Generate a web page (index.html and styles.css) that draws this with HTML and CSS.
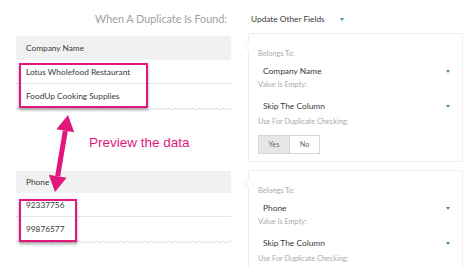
FILE: index.html
```html
<!DOCTYPE html>
<html lang="en">

<head>
    <meta charset="UTF-8">
    <title>Duplicate Settings</title>
    <link rel="stylesheet" href="styles.css">
</head>

<body>
    <div class="page">
        <div class="top-left">When A Duplicate Is Found:</div>
        <div class="top-right">
            <span class="mode">Update Other Fields</span>
            <span class="caret"></span>
        </div>

        <div class="column-block">
            <div class="col-header">Company Name</div>
            <div class="col-row">Lotus Wholefood Restaurant</div>
            <div class="col-row last">FoodUp Cooking Supplies</div>
            <svg class="wavy" width="215" height="4"><defs><pattern id="zz" width="6" height="4" patternUnits="userSpaceOnUse"><polyline points="0,3 3,1 6,3" fill="none" stroke="#dcdcdc" stroke-width="1"/></pattern></defs><rect width="215" height="4" fill="url(#zz)"/></svg>
        </div>
        <div class="card">
            <div class="field-label">Belongs To:</div>
            <div class="select s1">Company Name <span class="caret"></span></div>
            <div class="field-label l2">Value Is Empty:</div>
            <div class="select s2">Skip The Column <span class="caret"></span></div>
            <div class="field-label l3">Use For Duplicate Checking:</div>
            <div class="toggle">
                <span class="opt on">Yes</span><span class="opt">No</span>
            </div>
        </div>

        <div class="column-block second">
            <div class="col-header">Phone</div>
            <div class="col-row">92337756</div>
            <div class="col-row last">99876577</div>
            <svg class="wavy" width="215" height="4"><rect width="215" height="4" fill="url(#zz)"/></svg>
        </div>
        <div class="card">
            <div class="field-label">Belongs To:</div>
            <div class="select s1">Phone <span class="caret"></span></div>
            <div class="field-label l2">Value Is Empty:</div>
            <div class="select s2">Skip The Column <span class="caret"></span></div>
            <div class="field-label l3">Use For Duplicate Checking:</div>
        </div>
    </div>

    <!-- annotation layer -->
    <div class="mark mark-company"></div>
    <div class="mark mark-phone"></div>
    <div class="note">Preview the data</div>
    <svg class="arrow" width="474" height="267">
        <line x1="65.3" y1="130.8" x2="57.7" y2="176.2" stroke="#e3167c" stroke-width="5"/>
        <polygon points="68,115 74.2,132.3 56.4,129.3" fill="#e3167c"/>
        <polygon points="55,192 66.6,177.7 48.8,174.7" fill="#e3167c"/>
    </svg>
</body>

</html>
```

FILE: styles.css
```css
body {
    margin: 0;
    width: 474px;
    height: 267px;
    overflow: hidden;
    position: relative;
    background: #fff;
    font-family: 'Lato', 'Open Sans', sans-serif;
    color: #3a3a3a;
}

.page {
    display: grid;
    grid-template-columns: 215px 215px;
    grid-template-rows: 33px 137px auto;
    column-gap: 17px;
    padding-left: 16px;
}

.top-left {
    text-align: right;
    padding-right: 4px;
    padding-top: 12px;
    font-size: 10.8px;
    line-height: 14px;
    color: #a0a0a0;
}

.top-right {
    display: flex;
    align-items: center;
    padding-left: 3px;
    padding-top: 12px;
    height: 14px;
}

.mode {
    font-size: 8.3px;
    width: 89px;
    flex-shrink: 0;
}

.caret {
    display: inline-block;
    width: 0;
    height: 0;
    border-left: 2.5px solid transparent;
    border-right: 2.5px solid transparent;
    border-top: 3.5px solid #3d8fc6;
}

.column-block {
    padding-top: 3px;
}

.column-block.second {
    padding-top: 1px;
}

.col-header {
    height: 24px;
    line-height: 24px;
    background: #f1f1f1;
    padding-left: 10px;
    font-size: 8.3px;
}

.second .col-header {
    height: 22px;
    line-height: 22px;
}

.col-row {
    height: 23px;
    line-height: 24px;
    padding-left: 10px;
    font-size: 8.3px;
    border-bottom: 1px solid #e6e6e6;
}

.col-row.last {
    border-bottom: none;
    height: 24px;
}

.wavy {
    display: block;
    margin-top: -1px;
}

.card {
    border: 1px solid #eeeeee;
    border-radius: 2px;
    padding: 14px 9px 10px;
    margin-bottom: 8px;
    position: relative;
}

.card::before {
    content: "";
    position: absolute;
    left: -4px;
    top: 9px;
    width: 6px;
    height: 6px;
    background: #fff;
    border-left: 1px solid #f2f2f2;
    border-bottom: 1px solid #f2f2f2;
    transform: rotate(45deg);
}

.field-label {
    font-size: 7.3px;
    line-height: 11px;
    color: #aaa;
}

.field-label.l2 {
    margin-top: 1px;
}

.field-label.l3 {
    margin-top: 3px;
}

.select {
    display: flex;
    justify-content: space-between;
    align-items: center;
    font-size: 8.4px;
    line-height: 14px;
    padding: 0 3px 0 5px;
}

.select.s1 {
    margin-top: 5px;
}

.select.s2 {
    margin-top: 9px;
}

.toggle {
    display: flex;
    margin-top: 8px;
}

.opt {
    width: 29px;
    height: 17px;
    line-height: 17px;
    text-align: center;
    font-size: 7.3px;
    color: #666;
    border: 1px solid #d6d6d6;
}

.opt.on {
    width: 30px;
    background: #e6e6e6;
    border-right: none;
}

.mark {
    position: absolute;
    border: 2px solid #e3167c;
    box-shadow: 0 2px 3px rgba(0, 0, 0, 0.35);
}

.mark-company {
    left: 19px;
    top: 63px;
    width: 125px;
    height: 41px;
}

.mark-phone {
    left: 19px;
    top: 199px;
    width: 54px;
    height: 39px;
}

.note {
    position: absolute;
    left: 89px;
    top: 135px;
    font-family: 'Liberation Sans', Arial, sans-serif;
    font-size: 13.5px;
    line-height: 16px;
    color: #e2177e;
}

.arrow {
    position: absolute;
    left: 0;
    top: 0;
}
```
